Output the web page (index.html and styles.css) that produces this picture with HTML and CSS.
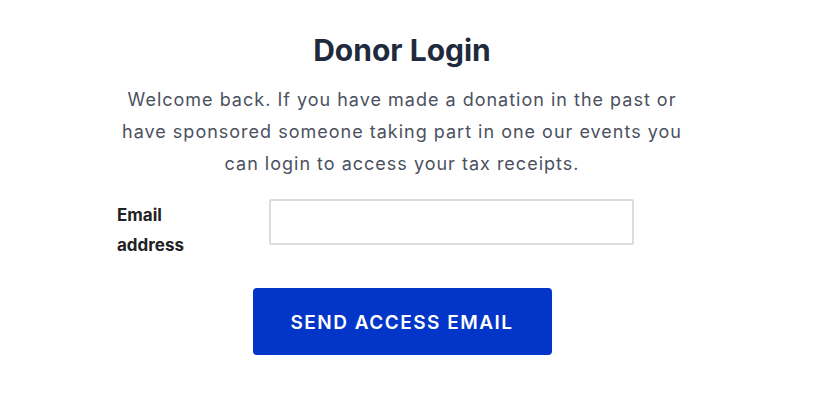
FILE: index.html
```html
<!DOCTYPE html>
<html lang="en">
<head>
    <meta charset="UTF-8">
    <meta name="viewport" content="width=device-width, initial-scale=1.0">
    <title>Donor Login</title>
    <link rel="stylesheet" href="styles.css">
</head>
<body>
    <div class="page">
        <div class="donor-login">
            <h1>Donor Login</h1>
            <p class="intro">Welcome back. If you have made a donation in the past or have sponsored someone taking part in one our events you can login to access your tax receipts.</p>

            <form class="login-form">
                <div class="form-row">
                    <label for="email">Email address</label>
                    <input type="email" id="email" name="email">
                </div>
                <button type="submit">Send access email</button>
            </form>
        </div>
    </div>
</body>
</html>
```

FILE: styles.css
```css
body {
    font-family: Inter, "Noto Sans", sans-serif;
    background-color: #ffffff;
    margin: 0;
}

.page {
    display: flex;
    justify-content: center;
    padding: 32px 18px 0 0;
}

.donor-login {
    width: 570px;
    text-align: center;
}

h1 {
    font-size: 30px;
    font-weight: 700;
    color: #1f2a3c;
    margin: 0;
    line-height: 36px;
}

.intro {
    font-size: 18px;
    line-height: 32px;
    letter-spacing: 1px;
    color: #4b5160;
    margin: 16px -10px 19px;
}

.form-row {
    display: grid;
    grid-template-columns: 152px 365px;
    text-align: left;
}

.form-row label {
    font-size: 17px;
    font-weight: 700;
    line-height: 30px;
    color: #222222;
    width: 90px;
    margin-top: 1px;
}

.form-row input {
    height: 46px;
    box-sizing: border-box;
    border: 2px solid #dcdcdc;
    border-radius: 2px;
    font-size: 16px;
    padding: 0 10px;
}

button {
    display: block;
    margin: 28px auto 0;
    padding-top: 3px;
    width: 299px;
    height: 67px;
    background-color: #0336c8;
    color: #ffffff;
    border: none;
    border-radius: 4px;
    font-family: inherit;
    font-size: 19px;
    font-weight: 600;
    letter-spacing: 1.5px;
    text-transform: uppercase;
    cursor: pointer;
}
```
